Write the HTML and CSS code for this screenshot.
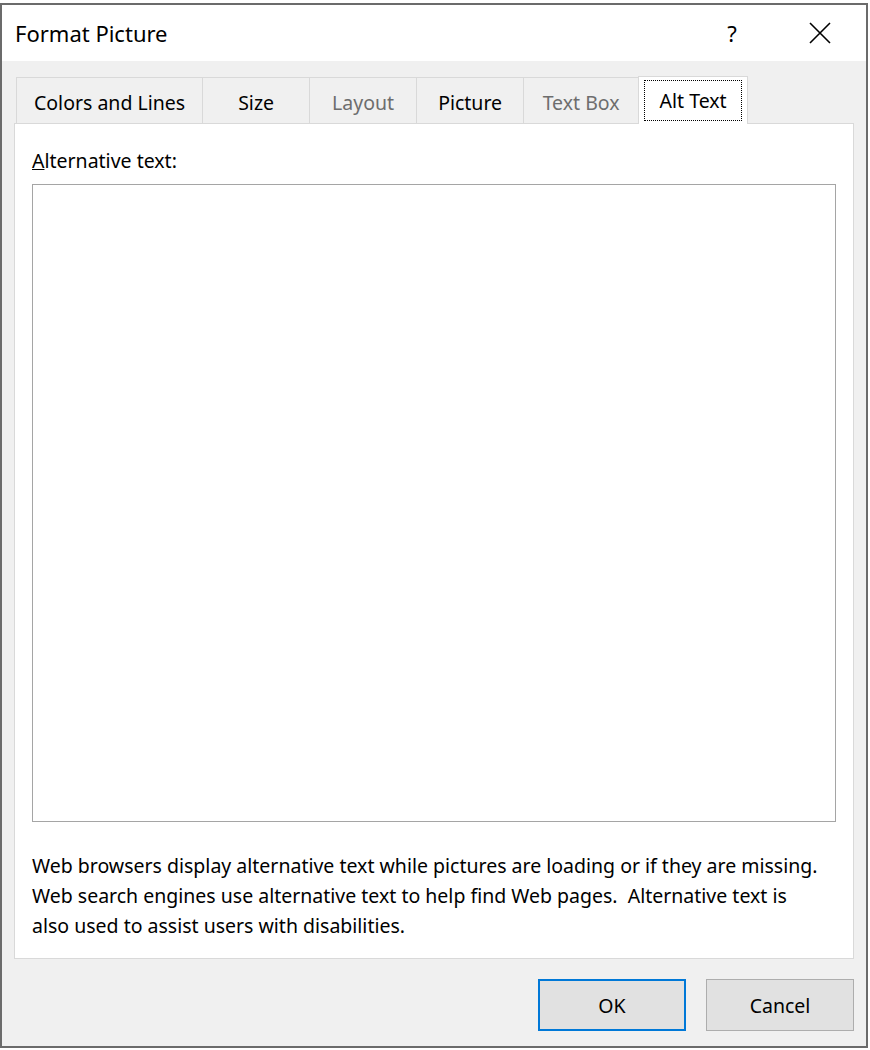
FILE: index.html
```html
<!DOCTYPE html>
<html lang="en">
<head>
    <meta charset="UTF-8">
    <title>Format Picture</title>
    <link rel="stylesheet" href="styles.css">
</head>
<body>
    <div class="dialog">
        <div class="titlebar">
            <span class="title">Format Picture</span>
            <span class="help">?</span>
            <span class="close">
                <svg width="22" height="22" viewBox="0 0 22 22">
                    <path d="M1 1 L21 21 M21 1 L1 21" stroke="#000" stroke-width="1.6" fill="none"/>
                </svg>
            </span>
        </div>

        <div class="content">
            <div class="tabs">
                <div class="tab">Colors and Lines</div>
                <div class="tab">Size</div>
                <div class="tab disabled">Layout</div>
                <div class="tab">Picture</div>
                <div class="tab disabled wide">Text Box</div>
                <div class="tab active"><span class="focus">Alt Text</span></div>
            </div>

            <div class="panel">
                <label class="label" for="altText"><u>A</u>lternative text:</label>
                <textarea id="altText" class="alt-box"></textarea>
                <p class="note">
                    Web browsers display alternative text while pictures are loading or if they are missing.<br>
                    Web search engines use alternative text to help find Web pages.&nbsp; Alternative text is<br>
                    also used to assist users with disabilities.
                </p>
            </div>

            <div class="buttons">
                <button class="btn default">OK</button>
                <button class="btn">Cancel</button>
            </div>
        </div>
    </div>
</body>
</html>
```

FILE: styles.css
```css
body {
    margin: 0;
    padding: 3px 0 0 0;
    background-color: #ffffff;
    font-family: "Noto Sans", "Open Sans", sans-serif;
    color: #000;
}
.dialog {
    width: 864px;
    height: 1041px;
    border: 2px solid #6b6b6b;
    background-color: #f0f0f0;
    display: flex;
    flex-direction: column;
}
.titlebar {
    height: 56px;
    background: #fff;
    display: flex;
    align-items: center;
    flex-shrink: 0;
}
.title {
    font-size: 22px;
    padding-left: 13px;
    flex: 1;
}
.help {
    font-size: 22px;
    width: 30px;
    text-align: center;
    margin-right: 62px;
}
.close {
    display: flex;
    margin-right: 35px;
}
.content {
    padding: 15px 0 0 12px;
}
.tabs {
    display: flex;
    align-items: flex-end;
    padding-left: 2px;
    position: relative;
    z-index: 1;
}
.tab {
    height: 46px;
    line-height: 49px;
    min-width: 108px;
    box-sizing: border-box;
    padding: 0 17px;
    text-align: center;
    font-size: 19.5px;
    border: 1px solid #d9d9d9;
    border-bottom: none;
    margin-left: -1px;
}
.tab:first-child {
    margin-left: 0;
}
.tab.wide {
    min-width: 116px;
}
.tab.disabled {
    color: #6d6d6d;
}
.tab.active {
    height: 48px;
    line-height: 1;
    background: #fff;
    margin-bottom: -1px;
    padding: 3px 5px 0 5px;
    min-width: 110px;
}
.focus {
    display: block;
    border: 1px dotted #000;
    height: 41px;
    line-height: 40px;
    box-sizing: border-box;
}
.panel {
    width: 840px;
    height: 836px;
    box-sizing: border-box;
    background: #fff;
    border: 1px solid #d9d9d9;
    padding: 24px 16px 0 17px;
}
.label {
    display: block;
    font-size: 19.5px;
    line-height: 26px;
    margin-bottom: 10px;
}
.alt-box {
    display: block;
    width: 804px;
    height: 638px;
    box-sizing: border-box;
    border: 1px solid #a5a5a5;
    resize: none;
    margin: 0;
    padding: 0;
}
.note {
    font-size: 19.5px;
    line-height: 30px;
    margin: 29px 0 0 0;
    white-space: nowrap;
}
.buttons {
    display: flex;
    justify-content: flex-end;
    gap: 20px;
    width: 840px;
    margin-top: 20px;
}
.btn {
    width: 148px;
    height: 52px;
    background: #e1e1e1;
    border: 1px solid #adadad;
    font-family: inherit;
    font-size: 19.5px;
    color: #000;
    padding: 0;
}
.btn.default {
    border: 2px solid #0078d7;
}
```
